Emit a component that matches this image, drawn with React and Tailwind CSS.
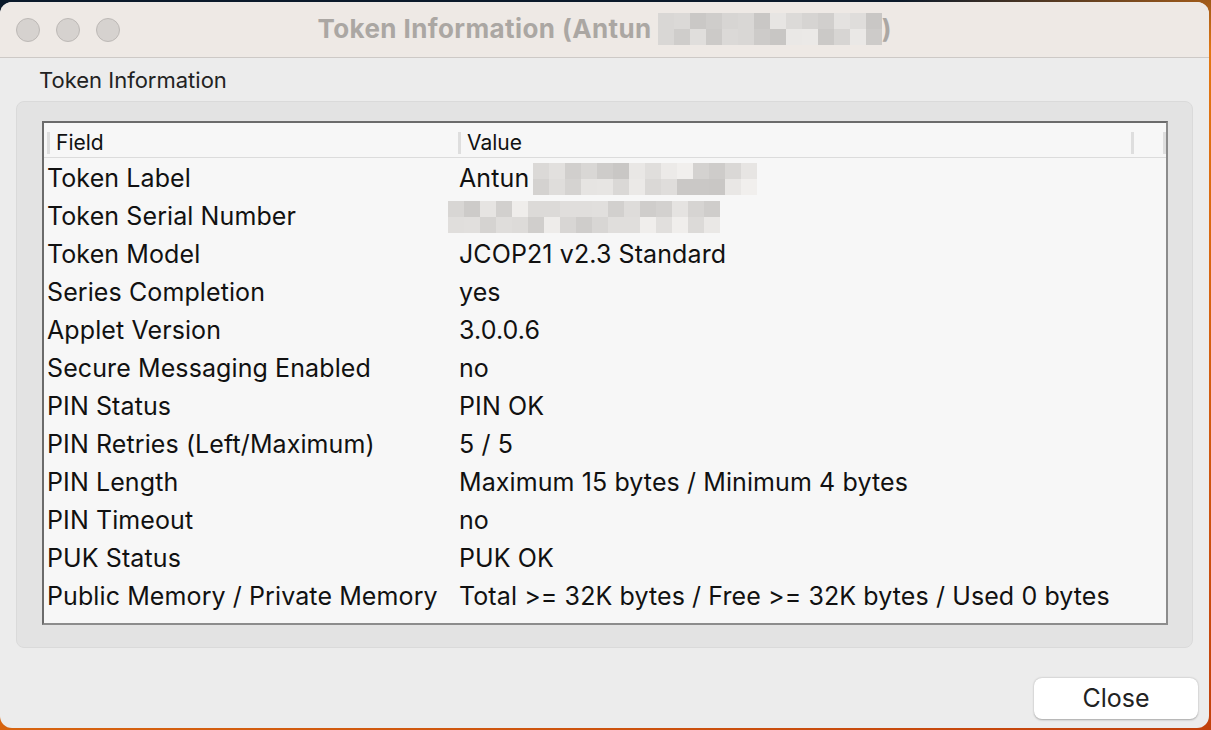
import React from 'react'

const rows = [
  ['Token Label', 'label'],
  ['Token Serial Number', 'serial'],
  ['Token Model', 'JCOP21 v2.3 Standard'],
  ['Series Completion', 'yes'],
  ['Applet Version', '3.0.0.6'],
  ['Secure Messaging Enabled', 'no'],
  ['PIN Status', 'PIN OK'],
  ['PIN Retries (Left/Maximum)', '5 / 5'],
  ['PIN Length', 'Maximum 15 bytes / Minimum 4 bytes'],
  ['PIN Timeout', 'no'],
  ['PUK Status', 'PUK OK'],
  ['Public Memory / Private Memory', 'Total >= 32K bytes / Free >= 32K bytes / Used 0 bytes'],
]

// pixelated (redacted) block, drawn as a mosaic
function Mosaic({ cols, rowsN, size, seed, light, dark }) {
  const cells = []
  let s = seed
  for (let r = 0; r < rowsN; r++) {
    for (let c = 0; c < cols; c++) {
      s = (s * 9301 + 49297) % 233280
      const t = s / 233280
      const v = Math.round(dark + (light - dark) * t)
      cells.push(<rect key={r + '-' + c} x={c * size} y={r * size} width={size} height={size} fill={`rgb(${v},${v - 2},${v - 4})`} />)
    }
  }
  return (
    <svg width={cols * size} height={rowsN * size} className="shrink-0 block">
      {cells}
    </svg>
  )
}

export default function App() {
  return (
    <div className="w-[1211px] h-[730px] pt-[2px] bg-[linear-gradient(160deg,#0b1a2b_0%,#0b1a2b_28%,#e27712_42%,#c2410c_100%)] font-['Inter','Liberation_Sans',sans-serif]">
      <div className="w-[1209px] h-[726px] rounded-[12px] overflow-hidden bg-[#ececec] flex flex-col">
        <div className="relative h-[56px] shrink-0 bg-[#eee9e5] border-b border-[#cdc9c6] flex items-center pl-[16px] gap-[16px]">
          <div className="w-[24px] h-[24px] rounded-full bg-[#d6d2cf] border border-[#bdb9b6]" />
          <div className="w-[24px] h-[24px] rounded-full bg-[#d6d2cf] border border-[#bdb9b6]" />
          <div className="w-[24px] h-[24px] rounded-full bg-[#d6d2cf] border border-[#bdb9b6]" />
          <div className="absolute inset-0 flex items-center justify-center pointer-events-none pb-[2px]">
            <span className="text-[26px] font-bold tracking-[0.4px] text-[#aba7a3]">Token Information (Antun</span>
            <span className="ml-[6px]"><Mosaic cols={14} rowsN={2} size={16} seed={7} light={236} dark={198} /></span>
            <span className="text-[26px] font-bold text-[#aba7a3]">)</span>
          </div>
        </div>

        <div className="flex-1 flex flex-col px-[16px]">
          <div className="pt-[10px] pl-[23px] text-[22px] leading-[25px] text-[#222]">Token Information</div>
          <div className="mt-[8px] w-[1177px] h-[547px] rounded-[8px] bg-[#e3e3e3] border border-[#dadada] pt-[19px] pl-[25px]">
            <div className="w-[1126px] h-[504px] bg-[#f7f7f7] border-t-2 border-l-2 border-t-[#6b6b6b] border-l-[#6b6b6b] border-r-2 border-b-2 border-r-[#8c8c8c] border-b-[#8c8c8c]">
              <div className="h-[35px] pt-[5px] border-b border-[#dcdcdc] flex items-center text-[21px] text-[#111]">
                <div className="w-[414px] flex items-center">
                  <div className="ml-[3px] w-[3px] h-[22px] bg-[#dedede]" />
                  <span className="ml-[6px]">Field</span>
                </div>
                <div className="w-[673px] flex items-center">
                  <div className="w-[3px] h-[22px] bg-[#dedede]" />
                  <span className="ml-[6px]">Value</span>
                </div>
                <div className="w-[3px] h-[22px] bg-[#dedede]" />
                <div className="ml-[29px] w-[3px] h-[22px] bg-[#dedede]" />
              </div>
              {rows.map(([f, v]) => (
                <div key={f} className="h-[38px] pt-[3px] flex items-center text-[25px] tracking-[0.1px] text-[#111]">
                  <div className="w-[415px] pl-[3px] whitespace-nowrap">{f}</div>
                  <div className="flex items-center whitespace-nowrap">
                    {v === 'label' ? (
                      <>
                        <span>Antun</span>
                        <span className="ml-[4px]"><Mosaic cols={14} rowsN={2} size={16} seed={31} light={242} dark={200} /></span>
                      </>
                    ) : v === 'serial' ? (
                      <span className="-ml-[11px]"><Mosaic cols={17} rowsN={2} size={16} seed={53} light={240} dark={205} /></span>
                    ) : (
                      v
                    )}
                  </div>
                </div>
              ))}
            </div>
          </div>
          <div className="flex justify-end mt-[30px]">
            <button className="-mr-[5px] w-[164px] h-[41px] rounded-[8px] bg-white shadow-[0_0.5px_2px_rgba(0,0,0,0.3)] text-[25px] text-[#222]">Close</button>
          </div>
        </div>
      </div>
    </div>
  )
}
